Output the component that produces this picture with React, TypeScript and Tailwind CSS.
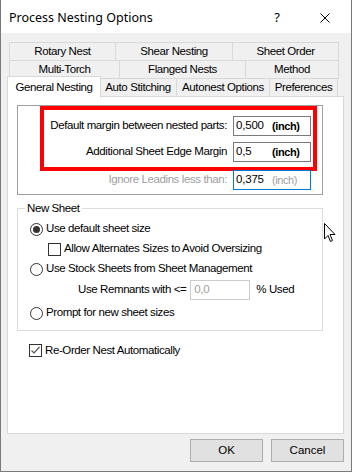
import { useState } from "react";

const ui = { fontFamily: '"Liberation Sans", Arial, sans-serif' };

type Tab = { label: string; w: string };

const row1: Tab[] = [
  { label: "Rotary Nest", w: "w-[107px]" },
  { label: "Shear Nesting", w: "w-[118px]" },
  { label: "Sheet Order", w: "w-[107px]" },
];
const row2: Tab[] = [
  { label: "Multi-Torch", w: "w-[111px]" },
  { label: "Flanged Nests", w: "w-[127px]" },
  { label: "Method", w: "w-[94px]" },
];
const row3: Tab[] = [
  { label: "Auto Stitching", w: "w-[78px]" },
  { label: "Autonest Options", w: "w-[94px]" },
  { label: "Preferences", w: "w-[69px]" },
];

function TabRow({ tabs }: { tabs: Tab[] }) {
  return (
    <div className="flex h-[19px] ml-[8px]">
      {tabs.map((t) => (
        <div
          key={t.label}
          className={`${t.w} flex items-center justify-center border border-[#d9d9d9] -ml-px first:ml-0 bg-[#f0f0f0] text-[11.5px] tracking-[-0.4px] text-black`}
        >
          {t.label}
        </div>
      ))}
    </div>
  );
}

function Radio({ checked }: { checked?: boolean }) {
  return (
    <span className="w-[13px] h-[13px] rounded-full border border-[#333] bg-white flex items-center justify-center shrink-0">
      {checked && <span className="w-[7px] h-[7px] rounded-full bg-[#333]" />}
    </span>
  );
}

function Check({ checked }: { checked?: boolean }) {
  return (
    <span className="w-[13px] h-[13px] border border-[#333] bg-white flex items-center justify-center shrink-0">
      {checked && (
        <svg width="11" height="11" viewBox="0 0 11 11">
          <path d="M1.5 5.5 L4 8 L9.5 2" fill="none" stroke="#555" strokeWidth="1.2" />
        </svg>
      )}
    </span>
  );
}

function Field({ value, unitDim, blue }: { value: string; unitDim?: boolean; blue?: boolean }) {
  return (
    <div
      className={`w-[78px] h-[20px] flex items-center bg-white border ${blue ? "border-[#0078d7]" : "border-[#7a7a7a]"} pl-[2px]`}
    >
      <span className="w-[36px] text-[11.5px] tracking-[-0.2px] text-black">{value}</span>
      <span className={`text-[11px] ${unitDim ? "text-[#a0a0a0]" : "font-bold text-black tracking-[-0.4px]"}`}>(inch)</span>
    </div>
  );
}

export default function App() {
  const [sheet, setSheet] = useState(0);

  return (
    <div className="w-[352px] h-[472px] relative bg-white flex flex-col overflow-hidden" style={ui}>
      <div className="h-[33px] shrink-0 flex items-center border-x border-[#7a7a7a] bg-white pt-[3px]">
        <span className="ml-[8px] text-[12.5px] text-black" style={{ fontFamily: '"Noto Sans", sans-serif' }}>
          Process Nesting Options
        </span>
        <span className="ml-auto mr-[40px] text-[13px] text-black mt-[-1px]" style={{ fontFamily: '"Noto Sans", sans-serif' }}>
          ?
        </span>
        <svg className="mr-[21px]" width="10" height="10" viewBox="0 0 10 10">
          <path d="M0.5 0.5 L9.5 9.5 M9.5 0.5 L0.5 9.5" stroke="#000" strokeWidth="1" />
        </svg>
      </div>

      <div className="flex-1 flex flex-col bg-[#f0f0f0] border-x border-b border-[#7a7a7a] pt-[9px]">
        <TabRow tabs={row1} />
        <div className="-mt-px">
          <TabRow tabs={row2} />
        </div>
        <div className="flex items-end h-[19px] -mt-px ml-[6px]">
          <div className="w-[94px] h-[22px] shrink-0 bg-white border border-b-0 border-[#d9d9d9] relative z-10 -mb-px flex items-start pt-[2px] justify-center text-[11.5px] tracking-[-0.4px]">
            General Nesting
          </div>
          <div className="flex h-[19px] -ml-px">
            {row3.map((t) => (
              <div
                key={t.label}
                className={`${t.w} flex items-center justify-center border border-[#d9d9d9] -ml-px bg-[#f0f0f0] text-[11.5px] tracking-[-0.4px]`}
              >
                {t.label}
              </div>
            ))}
          </div>
        </div>

        <div className="ml-[6px] -mt-px w-[337px] h-[338px] bg-white border border-[#d9d9d9] flex flex-col pl-[9px] pt-[8px] text-[11.5px] tracking-[-0.4px]">
          <div className="w-[306px] h-[90px] shrink-0 border border-[#a0a0a0] flex flex-col">
            <div className="ml-[22px] w-[277px] h-[65px] shrink-0 border-[4px] border-[#ff0000] flex flex-col pt-[6px] pr-[2px]">
              <div className="flex items-center justify-end gap-[6px]">
                <span className="text-black">Default margin between nested parts:</span>
                <Field value="0,500" />
              </div>
              <div className="flex items-center justify-end gap-[6px] mt-[6px]">
                <span className="text-black">Additional Sheet Edge Margin</span>
                <Field value="0,5" />
              </div>
            </div>
            <div className="flex items-center justify-end gap-[6px] mr-[11px] -mt-[1px]">
              <span className="text-[#a0a0a0]">Ignore Leadins less than:</span>
              <Field value="0,375" unitDim blue />
            </div>
          </div>

          <div className="mt-[13px] w-[306px] h-[123px] shrink-0 border border-[#dcdcdc] relative flex flex-col pl-[12px] pt-[10px]">
            <span className="absolute -top-[9px] left-[7px] bg-white px-[2px] text-black">New Sheet</span>
            <label className="flex items-center gap-[3px] h-[20px]" onClick={() => setSheet(0)}>
              <Radio checked={sheet === 0} />
              <span>Use default sheet size</span>
            </label>
            <label className="flex items-center gap-[3px] h-[20px] ml-[18px]">
              <Check />
              <span>Allow Alternates Sizes to Avoid Oversizing</span>
            </label>
            <label className="flex items-center gap-[3px] h-[20px]" onClick={() => setSheet(1)}>
              <Radio checked={sheet === 1} />
              <span>Use Stock Sheets from Sheet Management</span>
            </label>
            <div className="flex items-center h-[22px] ml-[48px]">
              <span>Use Remnants with &lt;=</span>
              <div className="ml-[4px] w-[60px] h-[20px] border border-[#cccccc] bg-white flex items-center pl-[3px] text-[#a0a0a0]">
                0,0
              </div>
              <span className="ml-[6px]">% Used</span>
            </div>
            <label className="flex items-center gap-[3px] h-[24px]" onClick={() => setSheet(2)}>
              <Radio checked={sheet === 2} />
              <span>Prompt for new sheet sizes</span>
            </label>
          </div>

          <label className="flex items-center gap-[3px] mt-[11px] ml-[12px]">
            <Check checked />
            <span>Re-Order Nest Automatically</span>
          </label>
        </div>

        <div className="flex justify-end gap-[8px] mt-[5px] mr-[7px]">
          <button className="w-[73px] h-[23px] bg-[#e1e1e1] border border-[#adadad] text-[11.5px] text-black">OK</button>
          <button className="w-[73px] h-[23px] bg-[#e1e1e1] border border-[#adadad] text-[11.5px] text-black">Cancel</button>
        </div>
      </div>

      <svg className="absolute left-[324px] top-[223px]" width="12" height="20" viewBox="0 0 12 20">
        <path d="M0.5 0.5 L0.5 16 L4 12.5 L6.5 18.5 L8.5 17.5 L6 11.5 L11 11.5 Z" fill="#fff" stroke="#000" strokeWidth="1" />
      </svg>
    </div>
  );
}
